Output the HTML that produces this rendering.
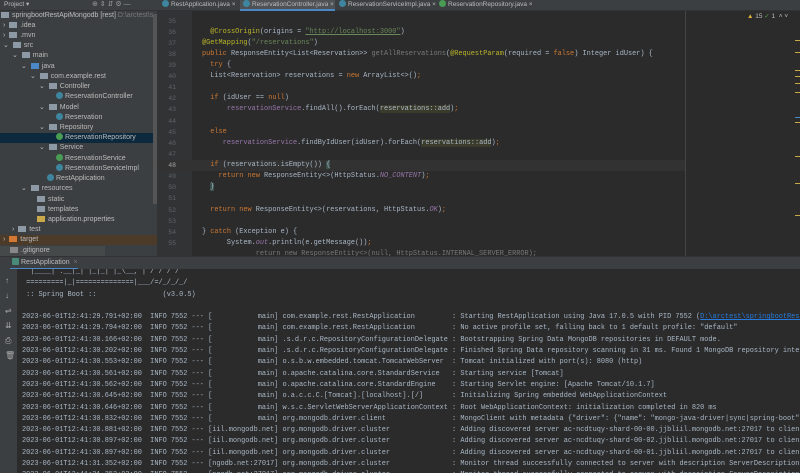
<!DOCTYPE html>
<html><head><style>
*{margin:0;padding:0;box-sizing:border-box}
html,body{width:800px;height:473px;overflow:hidden}
body{background:#2b2b2b;position:relative;font-family:"Liberation Sans",sans-serif}
.a{position:absolute;white-space:pre}
.m{font-family:"Liberation Mono",monospace;font-size:6.9px;color:#a9b7c6;line-height:11px}
.t{font-size:7px;color:#bbbbbb;line-height:10px}
.k{color:#cc7832}.s{color:#6a8759}.an{color:#bbb529}.f{color:#9876aa}.g{color:#787878}.hl{background:#3b3b2b;color:#a9b7c6}
.ic{display:inline-block;width:7px;height:7px;border-radius:50%;vertical-align:-1px;margin-right:2px}
.fo{display:inline-block;width:8px;height:6px;background:#8d9aa5;vertical-align:-1px;margin-right:3px}
.ln{position:absolute;left:156px;width:20px;text-align:right;font-family:"Liberation Mono",monospace;font-size:6.5px;color:#606366;line-height:11px}
.clip{position:absolute;overflow:hidden}
</style></head><body>
<div class="a" style="left:0;top:0;width:800px;height:11px;background:#3c3f41;border-bottom:1px solid #323232"></div>
<div class="a t" style="left:4px;top:0;font-size:6.5px">Project ▾</div>
<div class="a t" style="left:92px;top:0;color:#999">⊕ ⇕ ⇵ ⚙ —</div>
<div class="a t" style="left:162px;top:0;font-size:6.5px"><span class="ic" style="background:#3e86a0"></span>RestApplication.java ×</div>
<div class="a" style="left:240px;top:0;width:95px;height:11px;background:#4e5254;border-bottom:2px solid #4a88c7"></div>
<div class="a t" style="left:243px;top:0;font-size:6.5px"><span class="ic" style="background:#3e86a0"></span>ReservationController.java ×</div>
<div class="a t" style="left:339px;top:0;font-size:6.5px"><span class="ic" style="background:#3e86a0"></span>ReservationServiceImpl.java ×</div>
<div class="a t" style="left:439px;top:0;font-size:6.5px"><span class="ic" style="background:#499c54"></span>ReservationRepository.java ×</div>
<div class="a" style="left:0;top:11px;width:157px;height:245px;background:#3c3f41"></div>
<div class="a" style="left:153px;top:14px;width:4px;height:190px;background:#555"></div>
<div class="a" style="left:0;top:133px;width:153px;height:10px;background:#0d293e"></div>
<div class="a" style="left:0;top:235px;width:157px;height:10px;background:#4d3b2a"></div>
<div class="a" style="left:0;top:246px;width:105px;height:10px;background:#45494a"></div>
<div class="clip" style="left:0;top:11px;width:153px;height:245px">
<div class="a t" style="left:1px;top:0px"><span class="fo"></span>springbootRestApiMongodb [rest] <span class="g">D:\arctest\springb</span></div>
<div class="a t" style="left:3px;top:10px">›  <span class="fo"></span>.idea</div>
<div class="a t" style="left:3px;top:20px">›  <span class="fo"></span>.mvn</div>
<div class="a t" style="left:3px;top:30px">⌄  <span class="fo"></span>src</div>
<div class="a t" style="left:12px;top:40px">⌄  <span class="fo"></span>main</div>
<div class="a t" style="left:21px;top:51px">⌄  <span class="fo" style="background:#4a88c7"></span>java</div>
<div class="a t" style="left:30px;top:61px">⌄  <span class="fo"></span>com.example.rest</div>
<div class="a t" style="left:39px;top:71px">⌄  <span class="fo"></span>Controller</div>
<div class="a t" style="left:56px;top:81px"><span class="ic" style="background:#3e86a0"></span>ReservationController</div>
<div class="a t" style="left:39px;top:92px">⌄  <span class="fo"></span>Model</div>
<div class="a t" style="left:56px;top:102px"><span class="ic" style="background:#3e86a0"></span>Reservation</div>
<div class="a t" style="left:39px;top:112px">⌄  <span class="fo"></span>Repository</div>
<div class="a t" style="left:56px;top:122px"><span class="ic" style="background:#499c54"></span>ReservationRepository</div>
<div class="a t" style="left:39px;top:132px">⌄  <span class="fo"></span>Service</div>
<div class="a t" style="left:56px;top:143px"><span class="ic" style="background:#499c54"></span>ReservationService</div>
<div class="a t" style="left:56px;top:153px"><span class="ic" style="background:#3e86a0"></span>ReservationServiceImpl</div>
<div class="a t" style="left:47px;top:163px"><span class="ic" style="background:#3e86a0"></span>RestApplication</div>
<div class="a t" style="left:21px;top:173px">⌄  <span class="fo"></span>resources</div>
<div class="a t" style="left:37px;top:184px"><span class="fo"></span>static</div>
<div class="a t" style="left:37px;top:194px"><span class="fo"></span>templates</div>
<div class="a t" style="left:37px;top:204px"><span class="fo" style="background:#c9a94a"></span>application.properties</div>
<div class="a t" style="left:12px;top:214px">›  <span class="fo"></span>test</div>
<div class="a t" style="left:3px;top:224px">›  <span class="fo" style="background:#d27a35"></span>target</div>
<div class="a t" style="left:10px;top:235px"><span class="fo" style="background:#888"></span>.gitignore</div>
</div>
<div class="a" style="left:157px;top:11px;width:35px;height:245px;background:#313335"></div>
<div class="a" style="left:157px;top:160px;width:528px;height:11px;background:#323232"></div>
<div class="a" style="left:685px;top:11px;width:1px;height:245px;background:#444"></div>
<div class="ln" style="top:16px">35</div><div class="ln" style="top:27px">36</div><div class="ln" style="top:38px">37</div><div class="ln" style="top:49px">38</div><div class="ln" style="top:60px">39</div><div class="ln" style="top:71px">40</div><div class="ln" style="top:82px">41</div><div class="ln" style="top:93px">42</div><div class="ln" style="top:104px">43</div><div class="ln" style="top:116px">44</div><div class="ln" style="top:127px">45</div><div class="ln" style="top:138px">46</div><div class="ln" style="top:149px">47</div><div class="ln" style="top:160px;color:#a4a3a3">48</div><div class="ln" style="top:171px">49</div><div class="ln" style="top:182px">50</div><div class="ln" style="top:193px">51</div><div class="ln" style="top:205px">52</div><div class="ln" style="top:216px">53</div><div class="ln" style="top:227px">54</div><div class="ln" style="top:238px">55</div>
<div class="clip" style="left:202px;top:11px;width:483px;height:245px">
<div class="a m" style="left:0;top:-8px">  <span class="k">private</span> <span class="g">ReservationServiceImpl reservationService;</span></div>
<div class="a m" style="left:0;top:16px">  <span class="an">@CrossOrigin</span>(origins = <span class="s" style="text-decoration:underline">"http://localhost:3000"</span>)</div>
<div class="a m" style="left:0;top:27px"><span class="an">@GetMapping</span>(<span class="s">"/reservations"</span>)</div>
<div class="a m" style="left:0;top:38px"><span class="k">public</span> ResponseEntity&lt;List&lt;Reservation&gt;&gt; <span class="g">getAllReservations</span>(<span class="an">@RequestParam</span>(required = <span class="k">false</span>) Integer idUser) {</div>
<div class="a m" style="left:0;top:49px">  <span class="k">try</span> {</div>
<div class="a m" style="left:0;top:60px">  List&lt;Reservation&gt; reservations = <span class="k">new</span> ArrayList&lt;&gt;()<span class="k">;</span></div>
<div class="a m" style="left:0;top:82px">  <span class="k">if</span> (idUser == <span class="k">null</span>)</div>
<div class="a m" style="left:0;top:93px">      <span class="f">reservationService</span>.findAll().forEach(<span class="hl">reservations::add</span>)<span class="k">;</span></div>
<div class="a m" style="left:0;top:116px">  <span class="k">else</span></div>
<div class="a m" style="left:0;top:127px">     <span class="f">reservationService</span>.findByIdUser(idUser).forEach(<span class="hl">reservations::add</span>)<span class="k">;</span></div>
<div class="a m" style="left:0;top:149px">  <span class="k">if</span> (reservations.isEmpty()) <span style="background:#3b514d">{</span></div>
<div class="a m" style="left:0;top:160px">    <span class="k">return new</span> ResponseEntity&lt;&gt;(HttpStatus.<span class="f"><i>NO_CONTENT</i></span>)<span class="k">;</span></div>
<div class="a m" style="left:0;top:171px">  <span style="background:#3b514d">}</span></div>
<div class="a m" style="left:0;top:194px">  <span class="k">return new</span> ResponseEntity&lt;&gt;(reservations, HttpStatus.<span class="f"><i>OK</i></span>)<span class="k">;</span></div>
<div class="a m" style="left:0;top:216px">} <span class="k">catch</span> (Exception e) {</div>
<div class="a m" style="left:0;top:227px">      System.<span class="f"><i>out</i></span>.println(e.getMessage())<span class="k">;</span></div>
<div class="a m" style="left:0;top:238px;color:#777">             return new ResponseEntity&lt;&gt;(null, HttpStatus.INTERNAL_SERVER_ERROR);</div>
</div>
<div class="a t" style="left:747px;top:12px;font-size:6.5px"><span style="color:#e0b03b">▲</span> 15 <span style="color:#5b9e4d">✓</span> 1  ˄ ˅</div>
<div class="a" style="left:795px;top:40px;width:5px;height:1px;background:#c9a94a"></div>
<div class="a" style="left:795px;top:52px;width:5px;height:1px;background:#c9a94a"></div>
<div class="a" style="left:795px;top:70px;width:5px;height:1px;background:#c9a94a"></div>
<div class="a" style="left:795px;top:76px;width:5px;height:1px;background:#c9a94a"></div>
<div class="a" style="left:795px;top:83px;width:5px;height:1px;background:#c9a94a"></div>
<div class="a" style="left:795px;top:92px;width:5px;height:1px;background:#c9a94a"></div>
<div class="a" style="left:795px;top:117px;width:5px;height:1px;background:#4a88c7"></div>
<div class="a" style="left:795px;top:122px;width:5px;height:1px;background:#c9a94a"></div>
<div class="a" style="left:795px;top:156px;width:5px;height:1px;background:#c9a94a"></div>
<div class="a" style="left:795px;top:183px;width:5px;height:1px;background:#c9a94a"></div>
<div class="a" style="left:795px;top:215px;width:5px;height:1px;background:#c9a94a"></div>
<div class="a" style="left:0;top:256px;width:800px;height:13px;background:#3c3f41;border-top:1px solid #323232"></div>
<div class="a t" style="left:12px;top:258px"><span class="ic" style="background:#4a8a7a;border-radius:1px"></span>RestApplication  <span class="g">×</span></div>
<div class="a" style="left:10px;top:268px;width:68px;height:1px;background:#4a88c7"></div>
<div class="a" style="left:0;top:269px;width:17px;height:204px;background:#3c3f41"></div>
<div class="a t" style="left:5px;top:273px;color:#aaa;line-height:15px;font-size:8px">↑<br>↓<br>⇌<br>⇊<br>⎙<br>🗑</div>
<div class="clip" style="left:22px;top:269px;width:778px;height:204px">
<div class="a m" style="left:0;top:-2px;line-height:11.3px">  |____| .__|_| |_|_| |_\__, | / / / /
 =========|_|==============|___/=/_/_/_/
 :: Spring Boot ::                (v3.0.5)

2023-06-01T12:41:29.791+02:00  INFO 7552 --- [           main] com.example.rest.RestApplication         : Starting RestApplication using Java 17.0.5 with PID 7552 (<span style="color:#287bde;text-decoration:underline">D:\arctest\springbootRestApiMongodb</span>
2023-06-01T12:41:29.794+02:00  INFO 7552 --- [           main] com.example.rest.RestApplication         : No active profile set, falling back to 1 default profile: "default"
2023-06-01T12:41:30.166+02:00  INFO 7552 --- [           main] .s.d.r.c.RepositoryConfigurationDelegate : Bootstrapping Spring Data MongoDB repositories in DEFAULT mode.
2023-06-01T12:41:30.202+02:00  INFO 7552 --- [           main] .s.d.r.c.RepositoryConfigurationDelegate : Finished Spring Data repository scanning in 31 ms. Found 1 MongoDB repository interfaces.
2023-06-01T12:41:30.553+02:00  INFO 7552 --- [           main] o.s.b.w.embedded.tomcat.TomcatWebServer  : Tomcat initialized with port(s): 8080 (http)
2023-06-01T12:41:30.561+02:00  INFO 7552 --- [           main] o.apache.catalina.core.StandardService   : Starting service [Tomcat]
2023-06-01T12:41:30.562+02:00  INFO 7552 --- [           main] o.apache.catalina.core.StandardEngine    : Starting Servlet engine: [Apache Tomcat/10.1.7]
2023-06-01T12:41:30.645+02:00  INFO 7552 --- [           main] o.a.c.c.C.[Tomcat].[localhost].[/]       : Initializing Spring embedded WebApplicationContext
2023-06-01T12:41:30.646+02:00  INFO 7552 --- [           main] w.s.c.ServletWebServerApplicationContext : Root WebApplicationContext: initialization completed in 820 ms
2023-06-01T12:41:30.832+02:00  INFO 7552 --- [           main] org.mongodb.driver.client                : MongoClient with metadata {"driver": {"name": "mongo-java-driver|sync|spring-boot", "version"
2023-06-01T12:41:30.881+02:00  INFO 7552 --- [iil.mongodb.net] org.mongodb.driver.cluster               : Adding discovered server ac-ncdtuqy-shard-00-00.jjbliil.mongodb.net:27017 to client view
2023-06-01T12:41:30.897+02:00  INFO 7552 --- [iil.mongodb.net] org.mongodb.driver.cluster               : Adding discovered server ac-ncdtuqy-shard-00-02.jjbliil.mongodb.net:27017 to client view
2023-06-01T12:41:30.897+02:00  INFO 7552 --- [iil.mongodb.net] org.mongodb.driver.cluster               : Adding discovered server ac-ncdtuqy-shard-00-01.jjbliil.mongodb.net:27017 to client view
2023-06-01T12:41:31.352+02:00  INFO 7552 --- [ngodb.net:27017] org.mongodb.driver.cluster               : Monitor thread successfully connected to server with description ServerDescription{address
2023-06-01T12:41:31.352+02:00  INFO 7552 --- [ngodb.net:27017] org.mongodb.driver.cluster               : Monitor thread successfully connected to server with description ServerDescription{address</div>
</div>
</body></html>
